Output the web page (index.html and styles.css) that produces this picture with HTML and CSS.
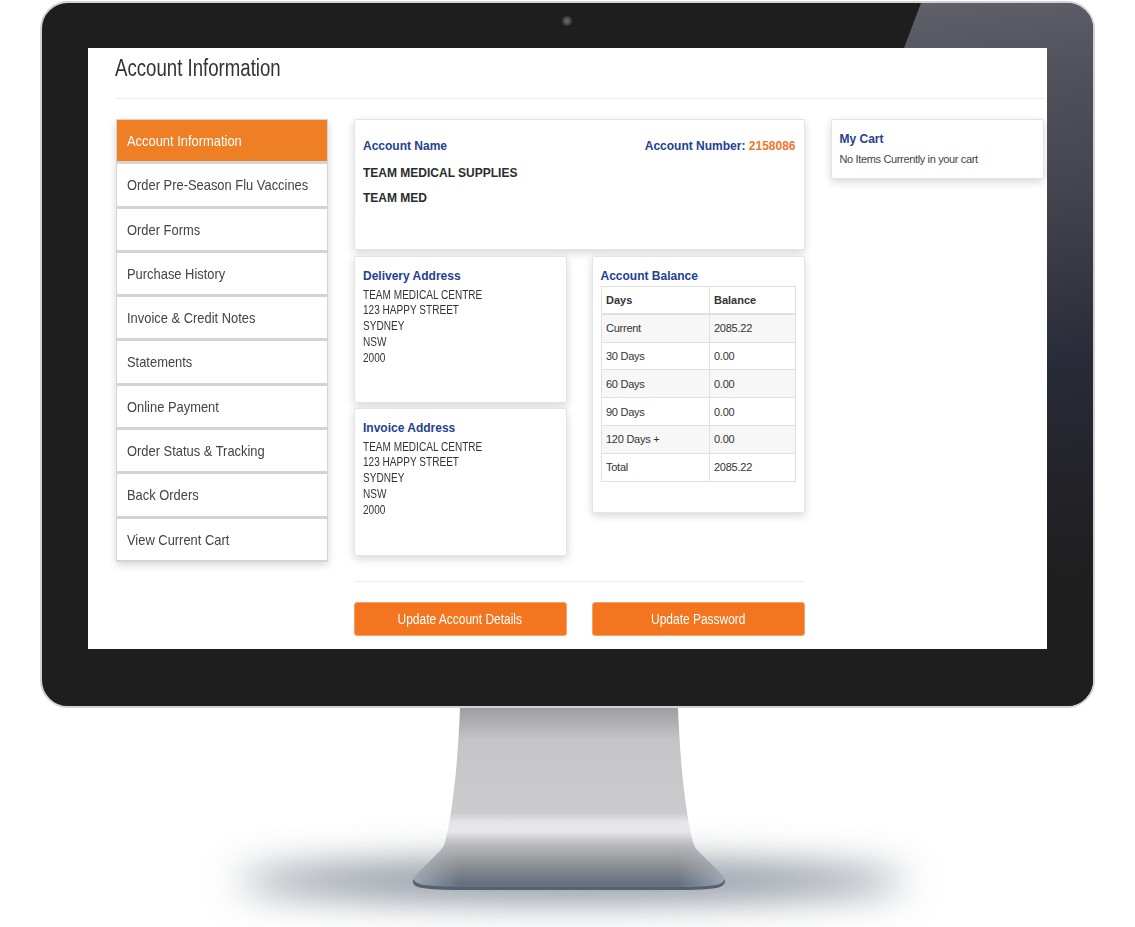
FILE: index.html
```html
<!DOCTYPE html>
<html lang="en">
<head>
    <meta charset="UTF-8">
    <meta name="viewport" content="width=device-width, initial-scale=1.0">
    <title>Account Information</title>
    <link rel="stylesheet" href="styles.css">
</head>
<body>

<div class="stage">
    <!-- floor shadow and stand sit behind the monitor -->
    <svg class="stand" width="1135" height="927" viewBox="0 0 1135 927" aria-hidden="true">
        <defs>
            <filter id="floorBlur" x="-30%" y="-200%" width="160%" height="500%">
                <feGaussianBlur stdDeviation="19"></feGaussianBlur>
            </filter>
            <linearGradient id="neck" x1="0" y1="708" x2="0" y2="889" gradientUnits="userSpaceOnUse">
                <stop offset="0" stop-color="#9e9ea1"></stop>
                <stop offset="0.18" stop-color="#c5c5c8"></stop>
                <stop offset="0.58" stop-color="#cbcbce"></stop>
                <stop offset="0.63" stop-color="#e6e6e8"></stop>
                <stop offset="0.68" stop-color="#e8e8ea"></stop>
                <stop offset="0.76" stop-color="#b8b8bb"></stop>
                <stop offset="0.87" stop-color="#8d8f95"></stop>
                <stop offset="0.97" stop-color="#667080"></stop>
            </linearGradient>
            <linearGradient id="baseSides" x1="413" y1="0" x2="725" y2="0" gradientUnits="userSpaceOnUse">
                <stop offset="0" stop-color="#b4bbc3" stop-opacity="0.7"></stop>
                <stop offset="0.15" stop-color="#b4bbc3" stop-opacity="0"></stop>
                <stop offset="0.85" stop-color="#b4bbc3" stop-opacity="0"></stop>
                <stop offset="1" stop-color="#b4bbc3" stop-opacity="0.7"></stop>
            </linearGradient>
        </defs>
        <ellipse cx="572" cy="881" rx="335" ry="17" fill="#6f7a88" filter="url(#floorBlur)"></ellipse>
        <path d="M460 708 H678 C680 760 685 810 692 838 Q693 847 700 853 L722 875 Q728 882 716 885 Q700 888 680 888 H460 Q438 888 422 885 Q410 882 416 875 L438 853 Q445 847 446 838 C453 810 458 760 460 708 Z" fill="url(#neck)"></path>
        <path d="M446 838 Q445 847 438 853 L416 875 Q410 882 422 885 Q438 888 460 888 H680 Q700 888 716 885 Q728 882 722 875 L700 853 Q693 847 692 838 Z" fill="url(#baseSides)"></path>
        <path d="M413 879 Q416 884 424 885 Q442 887 460 887 H680 Q700 887 716 885 Q723 884 725 879 Q726 884 720 887 Q712 890 680 890 H460 Q428 890 418 887 Q412 885 413 879 Z" fill="#566070"></path>
    </svg>

    <div class="monitor">
        <div class="glare"></div>
        <div class="camera"></div>
        <div class="screen">
            <h1 class="page-title">Account Information</h1>
            <div class="page-rule"></div>

            <div class="columns">
                <div class="menu">
                    <a class="menu-item active"><span>Account Information</span></a>
                    <a class="menu-item"><span>Order Pre-Season Flu Vaccines</span></a>
                    <a class="menu-item"><span>Order Forms</span></a>
                    <a class="menu-item"><span>Purchase History</span></a>
                    <a class="menu-item"><span>Invoice &amp; Credit Notes</span></a>
                    <a class="menu-item"><span>Statements</span></a>
                    <a class="menu-item"><span>Online Payment</span></a>
                    <a class="menu-item"><span>Order Status &amp; Tracking</span></a>
                    <a class="menu-item"><span>Back Orders</span></a>
                    <a class="menu-item"><span>View Current Cart</span></a>
                </div>

                <div class="account">
                    <div class="card name-card">
                        <div class="name-row">
                            <span class="card-title">Account Name</span>
                            <span class="card-title">Account Number: <span class="number">2158086</span></span>
                        </div>
                        <p class="name-line">TEAM MEDICAL SUPPLIES</p>
                        <p class="name-line">TEAM MED</p>
                    </div>

                    <div class="details">
                        <div class="addresses">
                            <div class="card address-card">
                                <div class="card-title">Delivery Address</div>
                                <div class="address">TEAM MEDICAL CENTRE<br>123 HAPPY STREET<br>SYDNEY<br>NSW<br>2000</div>
                            </div>
                            <div class="card address-card invoice">
                                <div class="card-title">Invoice Address</div>
                                <div class="address">TEAM MEDICAL CENTRE<br>123 HAPPY STREET<br>SYDNEY<br>NSW<br>2000</div>
                            </div>
                        </div>

                        <div class="card balance-card">
                            <div class="card-title">Account Balance</div>
                            <table class="balance">
                                <thead>
                                    <tr><th>Days</th><th>Balance</th></tr>
                                </thead>
                                <tbody>
                                    <tr><td>Current</td><td>2085.22</td></tr>
                                    <tr><td>30 Days</td><td>0.00</td></tr>
                                    <tr><td>60 Days</td><td>0.00</td></tr>
                                    <tr><td>90 Days</td><td>0.00</td></tr>
                                    <tr><td>120 Days +</td><td>0.00</td></tr>
                                    <tr><td>Total</td><td>2085.22</td></tr>
                                </tbody>
                            </table>
                        </div>
                    </div>

                    <div class="account-rule"></div>

                    <div class="actions">
                        <button class="action-button"><span>Update Account Details</span></button>
                        <button class="action-button"><span>Update Password</span></button>
                    </div>
                </div>

                <div class="card cart-card">
                    <div class="card-title">My Cart</div>
                    <div class="cart-text">No Items Currently in your cart</div>
                </div>
            </div>
        </div>
    </div>
</div>

</body>
</html>
```

FILE: styles.css
```css
* {
    margin: 0;
    padding: 0;
    box-sizing: border-box;
    font-family: 'Liberation Sans', Arial, sans-serif;
}

body {
    background-color: #ffffff;
    overflow: hidden;
}

.stage {
    position: relative;
    width: 1135px;
    height: 927px;
    padding: 1px 0 0 40px;
}

.stand {
    position: absolute;
    left: 0;
    top: 0;
}

.monitor {
    position: relative;
    width: 1055px;
    height: 707px;
    padding: 45px 46px 0 46px;
    background-color: #1e1e1e;
    border: 2px solid #d2d2d4;
    border-radius: 28px;
    overflow: hidden;
}

.glare {
    position: absolute;
    top: 0;
    right: 0;
    width: 192px;
    height: 705px;
    background: linear-gradient(172deg, #60606b 0%, #50505b 14%, #45454f 28%, #292b38 52%, #232329 68%, #1e1e1e 85%);
    clip-path: polygon(20px 0, 100% 0, 100% 100%, 0 100%, 0 53px);
}

.camera {
    position: absolute;
    top: 13px;
    left: 520px;
    width: 10px;
    height: 10px;
    border-radius: 50%;
    background: radial-gradient(circle, #6e6e70 0%, #4c4c4e 40%, #1e1e1e 100%);
}

.screen {
    position: relative;
    width: 959px;
    height: 601px;
    padding: 0 2px 0 27px;
    background-color: #ffffff;
    overflow: hidden;
}

.page-title {
    font-size: 23px;
    font-weight: normal;
    line-height: 26px;
    margin-top: 7px;
    color: #333333;
    transform: scaleX(0.81);
    transform-origin: left;
}

.page-rule {
    height: 1px;
    margin-top: 17px;
    background-color: #eeeeee;
}

.columns {
    display: grid;
    grid-template-columns: 212px 450.5px 213px;
    gap: 26px;
    align-items: start;
    margin: 20px 0 0 1px;
}

.menu {
    display: flex;
    flex-direction: column;
    box-shadow: 0 3px 8px rgba(0, 0, 0, 0.16);
}

.menu-item {
    height: 44.3px;
    padding-left: 10px;
    border: 1px solid #d4d4d4;
    border-bottom-width: 2px;
    font-size: 14.5px;
    line-height: 42px;
    color: #444444;
    background-color: #ffffff;
}

.menu-item span {
    display: inline-block;
    white-space: nowrap;
    font: inherit;
    transform: scaleX(0.89);
    transform-origin: left;
}

.menu-item.active {
    background-color: #ee7f24;
    color: #ffffff;
}

.card {
    background-color: #ffffff;
    border: 1px solid #e4e4e4;
    border-radius: 2px;
    box-shadow: 0 3px 8px rgba(0, 0, 0, 0.16);
    padding: 0 8px;
}

.card-title {
    font-size: 12px;
    font-weight: bold;
    color: #234191;
}

.number {
    font: inherit;
    color: #f3752a;
}

.name-card {
    height: 131px;
    padding-top: 19px;
}

.name-row {
    display: flex;
    justify-content: space-between;
}

.name-line {
    font-size: 12px;
    font-weight: bold;
    color: #2b2b2b;
    margin-top: 13px;
}

.name-line + .name-line {
    margin-top: 11px;
}

.details {
    display: grid;
    grid-template-columns: 212.5px 213px;
    gap: 25px;
    align-items: start;
    margin-top: 6px;
}

.addresses {
    display: flex;
    flex-direction: column;
    gap: 5px;
}

.address-card {
    height: 147px;
    padding-top: 11.5px;
}

.address-card.invoice {
    height: 148px;
}

.address {
    font-size: 12.5px;
    line-height: 15.8px;
    white-space: nowrap;
    color: #333333;
    margin-top: 5px;
    transform: scaleX(0.805);
    transform-origin: left;
}

.balance-card {
    height: 257px;
    padding-top: 11.5px;
}

.balance {
    width: 195px;
    margin-top: 3.5px;
    border-collapse: collapse;
    table-layout: fixed;
}

.balance th, .balance td {
    height: 27.8px;
    padding-left: 4.5px;
    border: 1px solid #e0e0e0;
    font-size: 11px;
    letter-spacing: -0.25px;
    text-align: left;
    color: #333333;
}

.balance th {
    letter-spacing: 0;
}

.balance th:first-child, .balance td:first-child {
    width: 108px;
}

.balance thead th {
    border-bottom-width: 2px;
}

.balance tbody tr:nth-child(odd) td {
    background-color: #f7f7f8;
}

.account-rule {
    height: 1px;
    margin-top: 25px;
    background-color: #eeeeee;
}

.actions {
    display: grid;
    grid-template-columns: 212.5px 213px;
    gap: 25px;
    margin-top: 20px;
}

.action-button {
    height: 33.5px;
    border: 1px solid #f2a468;
    border-radius: 3px;
    background-color: #f47520;
    color: #ffffff;
    font-size: 14px;
}

.action-button span {
    display: inline-block;
    white-space: nowrap;
    font: inherit;
    transform: scaleX(0.855);
}

.cart-card {
    height: 60px;
    padding-top: 12px;
}

.cart-text {
    font-size: 11px;
    letter-spacing: -0.35px;
    color: #444444;
    margin-top: 7px;
}
```
